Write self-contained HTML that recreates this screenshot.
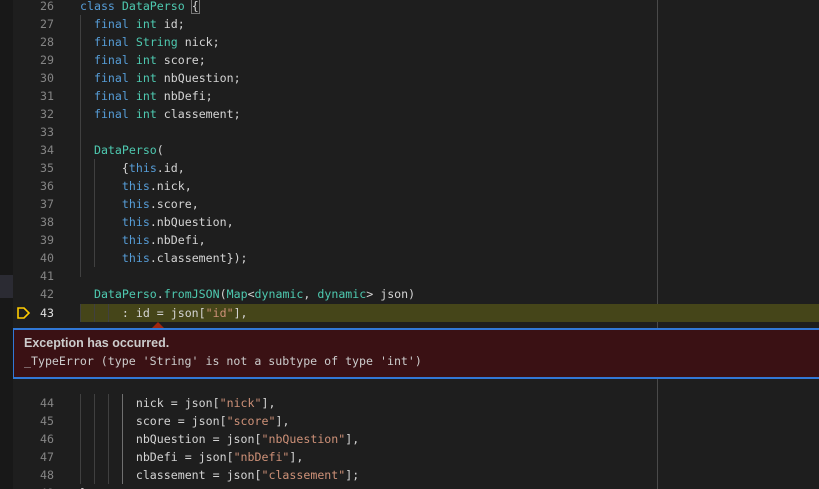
<!DOCTYPE html>
<html><head><style>
html,body{margin:0;padding:0;width:819px;height:489px;overflow:hidden;background:#1e1e1e}
#w{position:relative;width:819px;height:489px;overflow:hidden;font-family:"DejaVu Sans Mono","Liberation Mono",monospace;font-size:11.6px;}
.strip{position:absolute;left:0;top:0;width:13px;height:489px;background:#181818}
.l{position:absolute;left:0;height:18px;line-height:18px;width:819px;white-space:pre;color:#d4d4d4}
.n{position:absolute;left:20px;width:34px;text-align:right;color:#858585}
.c{position:absolute;left:80px}
.k{color:#569cd6}.t{color:#4ec9b0}.s{color:#ce9178}
.g{position:absolute;width:1px;background:#404040}
</style></head><body><div id="w">
<div class="strip"></div>
<div style="position:absolute;left:0;top:275px;width:13px;height:23px;background:#2b2b33"></div>
<div style="position:absolute;left:657px;top:0;width:1px;height:489px;background:#4a4a4a"></div>
<div style="position:absolute;left:80px;top:304px;width:739px;height:18px;background:#454519"></div>
<div class="g" style="left:80px;top:15px;height:262px"></div>
<div class="g" style="left:94px;top:159px;height:108px"></div>
<div class="g" style="left:80px;top:304px;height:18px"></div>
<div class="g" style="left:94px;top:304px;height:18px"></div>
<div class="g" style="left:108px;top:304px;height:18px"></div>
<div class="g" style="left:80px;top:394px;height:90px"></div>
<div class="g" style="left:94px;top:394px;height:90px"></div>
<div class="g" style="left:108px;top:394px;height:90px"></div>
<div class="g" style="left:122px;top:394px;height:90px;background:#707070"></div>

<div class="l" style="top:-3px"><span class="n">26</span><span class="c"><span class="k">class</span> <span class="t">DataPerso</span> <span style="outline:1px solid #777">{</span></span></div>
<div class="l" style="top:15px"><span class="n">27</span><span class="c">  <span class="k">final</span> <span class="t">int</span> id;</span></div>
<div class="l" style="top:33px"><span class="n">28</span><span class="c">  <span class="k">final</span> <span class="t">String</span> nick;</span></div>
<div class="l" style="top:51px"><span class="n">29</span><span class="c">  <span class="k">final</span> <span class="t">int</span> score;</span></div>
<div class="l" style="top:69px"><span class="n">30</span><span class="c">  <span class="k">final</span> <span class="t">int</span> nbQuestion;</span></div>
<div class="l" style="top:87px"><span class="n">31</span><span class="c">  <span class="k">final</span> <span class="t">int</span> nbDefi;</span></div>
<div class="l" style="top:105px"><span class="n">32</span><span class="c">  <span class="k">final</span> <span class="t">int</span> classement;</span></div>
<div class="l" style="top:123px"><span class="n">33</span></div>
<div class="l" style="top:141px"><span class="n">34</span><span class="c">  <span class="t">DataPerso</span>(</span></div>
<div class="l" style="top:159px"><span class="n">35</span><span class="c">      {<span class="k">this</span>.id,</span></div>
<div class="l" style="top:177px"><span class="n">36</span><span class="c">      <span class="k">this</span>.nick,</span></div>
<div class="l" style="top:195px"><span class="n">37</span><span class="c">      <span class="k">this</span>.score,</span></div>
<div class="l" style="top:213px"><span class="n">38</span><span class="c">      <span class="k">this</span>.nbQuestion,</span></div>
<div class="l" style="top:231px"><span class="n">39</span><span class="c">      <span class="k">this</span>.nbDefi,</span></div>
<div class="l" style="top:249px"><span class="n">40</span><span class="c">      <span class="k">this</span>.classement});</span></div>
<div class="l" style="top:267px"><span class="n">41</span></div>
<div class="l" style="top:285px"><span class="n">42</span><span class="c">  <span class="t">DataPerso</span>.<span class="t">fromJSON</span>(<span class="t">Map</span>&lt;<span class="t">dynamic</span>, <span class="t">dynamic</span>&gt; json)</span></div>
<div class="l" style="top:304px"><span class="n" style="color:#e0e0e0">43</span><span class="c">      : id = json[<span class="s">"id"</span>],</span></div>
<svg style="position:absolute;left:16px;top:306px" width="16" height="14"><path d="M2 2H8L13 7L8 12H2Z" fill="none" stroke="#ffcc00" stroke-width="1.6"/></svg>
<div style="position:absolute;left:152px;top:322px;width:0;height:0;border-left:6px solid transparent;border-right:6px solid transparent;border-bottom:6px solid #a1260d"></div>
<div style="position:absolute;left:13px;top:328px;width:806px;height:47px;background:#3a1114;border-top:2px solid #3178d6;border-bottom:2px solid #3178d6;border-left:1px solid #3178d6;color:#cccccc">
<div style="position:absolute;left:10px;top:6px;font-family:'Liberation Sans',sans-serif;font-weight:bold;font-size:12.5px">Exception has occurred.</div>
<div style="position:absolute;left:10px;top:24px;white-space:pre">_TypeError (type 'String' is not a subtype of type 'int')</div>
</div>
<div class="l" style="top:394px"><span class="n">44</span><span class="c">        nick = json[<span class="s">"nick"</span>],</span></div>
<div class="l" style="top:412px"><span class="n">45</span><span class="c">        score = json[<span class="s">"score"</span>],</span></div>
<div class="l" style="top:430px"><span class="n">46</span><span class="c">        nbQuestion = json[<span class="s">"nbQuestion"</span>],</span></div>
<div class="l" style="top:448px"><span class="n">47</span><span class="c">        nbDefi = json[<span class="s">"nbDefi"</span>],</span></div>
<div class="l" style="top:466px"><span class="n">48</span><span class="c">        classement = json[<span class="s">"classement"</span>];</span></div>
<div class="l" style="top:484px"><span class="n">49</span><span class="c">}</span></div>
</div></body></html>
